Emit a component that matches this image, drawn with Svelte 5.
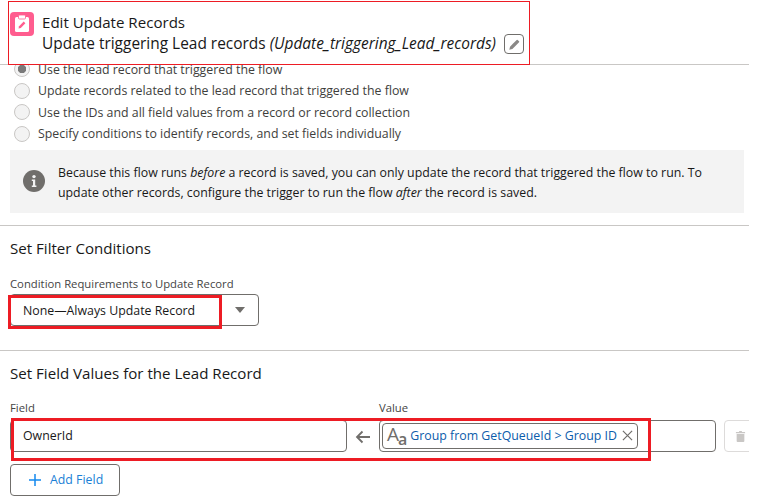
<script>
	const options = [
		{ text: 'Use the lead record that triggered the flow', checked: true },
		{ text: 'Update records related to the lead record that triggered the flow', checked: false },
		{ text: 'Use the IDs and all field values from a record or record collection', checked: false },
		{ text: 'Specify conditions to identify records, and set fields individually', checked: false }
	];
</script>

<div class="page">
	<header class="header">
		<div class="badge">
			<svg viewBox="0 0 24 24" width="24" height="24">
				<rect x="5" y="5" width="14" height="15" rx="1.6" fill="#fff" />
				<rect x="8.5" y="3" width="7" height="4" rx="1" fill="#fff" stroke="#ff5d8f" stroke-width="0.8" />
				<path d="M8.5 16.5l.6-2.3 4.6-4.6 1.7 1.7-4.6 4.6z" fill="#ff5d8f" />
			</svg>
		</div>
		<div class="titles">
			<div class="title">Edit Update Records</div>
			<div class="subtitle">
				<span>Update triggering Lead records <em>(Update_triggering_Lead_records)</em></span>
				<button class="edit" aria-label="Edit">
					<svg viewBox="0 0 14 14" width="13" height="13">
						<path d="M1.4 12.6l.8-3.3 3 -3 4.2-4.2a.7.7 0 0 1 1 0l1.5 1.5a.7.7 0 0 1 0 1L7.7 8.8l-3 3z" fill="#8a8886" />
					</svg>
				</button>
			</div>
		</div>
	</header>

	<div class="options">
		{#each options as option}
			<div class="option">
				<span class="radio" class:checked={option.checked}></span>
				<span>{option.text}</span>
			</div>
		{/each}
	</div>

	<div class="notice">
		<svg class="info" viewBox="0 0 22 22" width="22" height="22">
			<circle cx="11" cy="11" r="11" fill="#706e6b" />
			<circle cx="11" cy="6.6" r="1.7" fill="#f3f3f3" />
			<path d="M8.8 9.6h3.4v6h1.2v1.4H8.8v-1.4H10v-4.6H8.8z" fill="#f3f3f3" />
		</svg>
		<p>
			Because this flow runs <em>before</em> a record is saved, you can only update the record that triggered the flow to run. To
			update other records, configure the trigger to run the flow <em>after</em> the record is saved.
		</p>
	</div>

	<section class="filter">
		<h2>Set Filter Conditions</h2>
		<label class="label" for="cond">Condition Requirements to Update Record</label>
		<div class="select" id="cond">
			<span>None—Always Update Record</span>
			<span class="caret"></span>
		</div>
	</section>

	<section class="fields">
		<h2>Set Field Values for the Lead Record</h2>
		<div class="field-row">
			<div class="col">
				<div class="label">Field</div>
				<div class="input">OwnerId</div>
			</div>
			<svg class="arrow" viewBox="0 0 16 14" width="16" height="14">
				<path d="M15 7H2M7.5 1.5L2 7l5.5 5.5" fill="none" stroke="#706e6b" stroke-width="1.8" />
			</svg>
			<div class="col">
				<div class="label">Value</div>
				<div class="input value">
					<div class="pill">
						<span class="type"><span class="big">A</span><span class="small">a</span></span>
						<span class="pill-text">Group from GetQueueId &gt; Group ID</span>
						<svg viewBox="0 0 12 12" width="11" height="11">
							<path d="M1 1l10 10M11 1L1 11" stroke="#706e6b" stroke-width="1.3" />
						</svg>
					</div>
				</div>
			</div>
			<div class="trash">
				<svg viewBox="0 0 12 13" width="11" height="12">
					<path d="M4.5 1h3v1h3.5v1.4H1V2h3.5zM1.8 4.4h8.4V12a1 1 0 0 1-1 1H2.8a1 1 0 0 1-1-1z" fill="#c9c7c5" />
				</svg>
			</div>
		</div>
		<button class="add">
			<svg viewBox="0 0 12 12" width="12" height="12">
				<path d="M6 0v12M0 6h12" stroke="#1589ee" stroke-width="1.5" />
			</svg>
			Add Field
		</button>
	</section>

	<div class="mark mark-header"></div>
	<div class="mark mark-select"></div>
	<div class="mark mark-field"></div>
</div>

<style>
	:global(body) {
		background: #fff;
	}

	.page {
		position: relative;
		width: 749px;
		height: 502px;
		overflow: hidden;
		font-family: 'Open Sans', 'Noto Sans', sans-serif;
		font-size: 12.35px;
		color: #3e3e3c;
	}

	.header {
		position: relative;
		z-index: 1;
		display: flex;
		gap: 8px;
		height: 65px;
		box-sizing: border-box;
		padding: 12px 0 0 10px;
		background: #fff;
		border-bottom: 1px solid #c9c7c5;
	}

	.badge {
		display: flex;
		align-items: center;
		justify-content: center;
		width: 24px;
		height: 24px;
		border-radius: 4px;
		background: #ff5d8f;
	}

	.titles {
		color: #181818;
		font-size: 15.1px;
		line-height: 21px;
	}

	.subtitle {
		display: flex;
		align-items: center;
		gap: 8px;
		margin-top: -1px;
		font-size: 15.45px;
		white-space: nowrap;
	}

	.edit {
		display: flex;
		align-items: center;
		justify-content: center;
		width: 20px;
		height: 20px;
		margin-top: 2px;
		padding: 0;
		background: #fff;
		border: 1px solid #706e6b;
		border-radius: 4px;
	}

	.options {
		display: flex;
		flex-direction: column;
		gap: 3.5px;
		margin-top: -5px;
		padding-left: 14px;
	}

	.option {
		display: flex;
		align-items: center;
		gap: 8px;
		height: 18px;
		white-space: nowrap;
	}

	.radio {
		box-sizing: border-box;
		width: 16px;
		height: 16px;
		border-radius: 50%;
		border: 1px solid #c9c7c5;
		background: #f3f3f3;
		flex: none;
	}

	.radio.checked {
		background: radial-gradient(circle, #7a7a7a 0 4px, #f3f3f3 4.5px);
	}

	.notice {
		display: flex;
		align-items: center;
		gap: 13px;
		height: 63px;
		box-sizing: border-box;
		margin: 7px 5px 12px 10px;
		padding: 4px 12px 0 13px;
		background: #f3f3f3;
		color: #181818;
	}

	.notice p {
		margin: 0;
		line-height: 20px;
	}

	.info {
		flex: none;
		margin-top: -4px;
	}

	.filter {
		height: 125px;
		box-sizing: border-box;
		padding: 12px 0 0 10px;
		border-top: 1px solid #c9c7c5;
	}

	.fields {
		box-sizing: border-box;
		padding: 12px 0 0 10px;
		border-top: 1px solid #c9c7c5;
	}

	h2 {
		margin: 0 0 17px;
		font-size: 15.1px;
		font-weight: 400;
		line-height: 20px;
		color: #181818;
	}

	.label {
		display: block;
		height: 19px;
		line-height: 18px;
		font-size: 11.3px;
		color: #444;
	}

	.col .label {
		height: 20px;
		line-height: 16px;
	}

	.select {
		display: flex;
		align-items: center;
		justify-content: space-between;
		box-sizing: border-box;
		width: 249px;
		height: 32px;
		padding: 2px 13px 0 12px;
		border: 1px solid #706e6b;
		border-radius: 4px;
		color: #181818;
	}

	.caret {
		width: 0;
		height: 0;
		margin-top: -2px;
		border-left: 5px solid transparent;
		border-right: 5px solid transparent;
		border-top: 6px solid #706e6b;
	}

	.field-row {
		display: flex;
		align-items: flex-end;
		margin-bottom: 12px;
	}

	.col {
		width: 337px;
		flex: none;
	}

	.arrow {
		flex: none;
		margin: 0 8px 8px;
	}

	.input {
		display: flex;
		align-items: center;
		box-sizing: border-box;
		height: 32px;
		padding: 0 12px;
		border: 1px solid #706e6b;
		border-radius: 4px;
		background: #fff;
		color: #181818;
	}

	.input.value {
		padding: 0 2px;
	}

	.pill {
		display: flex;
		align-items: center;
		gap: 4px;
		box-sizing: border-box;
		width: 256px;
		height: 26px;
		padding: 0 4px;
		border: 1px solid #706e6b;
		border-radius: 4px;
		color: #0b5cab;
		white-space: nowrap;
	}

	.type {
		display: flex;
		align-items: flex-end;
		color: #706e6b;
		line-height: 1;
		letter-spacing: -1px;
	}

	.big {
		font-size: 19px;
		margin-bottom: 3px;
	}

	.small {
		font-size: 16px;
		font-weight: 600;
	}

	.pill-text {
		flex: 1;
	}

	.trash {
		display: flex;
		align-items: center;
		justify-content: center;
		flex: none;
		box-sizing: border-box;
		width: 32px;
		height: 32px;
		margin-left: 8px;
		border: 1px solid #dddbda;
		border-radius: 4px;
	}

	.add {
		display: flex;
		align-items: center;
		gap: 9px;
		box-sizing: border-box;
		width: 110px;
		height: 32px;
		padding: 0 0 0 18px;
		background: #fff;
		border: 1px solid #706e6b;
		border-radius: 4px;
		font: inherit;
		color: #1b7fd6;
	}

	.mark {
		position: absolute;
		z-index: 2;
		box-sizing: border-box;
		pointer-events: none;
	}

	.mark-header {
		left: 8px;
		top: 1px;
		width: 522px;
		height: 64px;
		border: 1px solid #ed1c24;
	}

	.mark-select {
		left: 8px;
		top: 295px;
		width: 214px;
		height: 34px;
		border: 3px solid #ed1c24;
	}

	.mark-field {
		left: 11px;
		top: 418px;
		width: 640px;
		height: 43px;
		border: 3px solid #ed1c24;
	}
</style>
